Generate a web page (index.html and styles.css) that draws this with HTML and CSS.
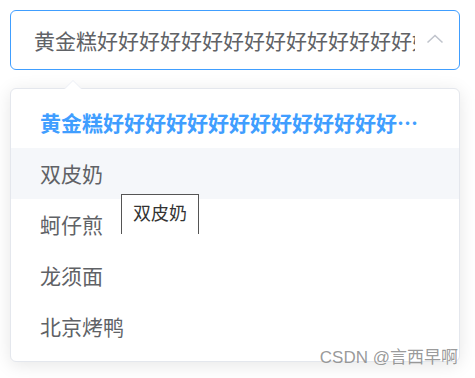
FILE: index.html
```html
<!DOCTYPE html>
<html lang="zh">
<head>
<meta charset="utf-8">
<link rel="stylesheet" href="styles.css">
</head>
<body>
<div class="page">
  <div class="select">
    <div class="select-input">
      <span class="select-value">黄金糕好好好好好好好好好好好好好好好好好好好好</span>
      <svg class="chevron" width="18" height="10" viewBox="0 0 18 10"><polyline points="1.5,8.5 9,1.5 16.5,8.5" fill="none" stroke="#c0c4cc" stroke-width="1.6"/></svg>
    </div>
    <div class="dropdown">
      <div class="arrow"></div>
      <ul class="options">
        <li class="option selected">黄金糕好好好好好好好好好好好好好好好好好好好好</li>
        <li class="option hover">双皮奶</li>
        <li class="option">蚵仔煎</li>
        <li class="option">龙须面</li>
        <li class="option">北京烤鸭</li>
      </ul>
      <div class="tooltip">双皮奶</div>
    </div>
  </div>
  <div class="watermark">CSDN @言西早啊</div>
</div>
</body>
</html>
```
FILE: styles.css
```css
html, body {
  margin: 0;
  padding: 0;
  background: #fff;
}
body {
  font-family: "Liberation Sans", "Noto Sans CJK SC", sans-serif;
}
.page {
  position: relative;
  width: 475px;
  height: 378px;
  padding: 10px 15px 0 10px;
  box-sizing: border-box;
  overflow: hidden;
}
.select {
  position: relative;
  width: 450px;
}
.select-input {
  height: 60px;
  box-sizing: border-box;
  border: 1px solid #409eff;
  border-radius: 6px;
  display: flex;
  align-items: center;
  padding: 0 15px 0 23px;
}
.select-value {
  flex: 1;
  min-width: 0;
  overflow: hidden;
  white-space: nowrap;
  font-size: 21px;
  line-height: 28px;
  color: #606266;
  margin-right: 11px;
  font-family: "Noto Sans CJK SC", sans-serif;
}
.chevron {
  flex: none;
  display: block;
  margin-top: -2px;
}
.dropdown {
  position: relative;
  margin-top: 18px;
  border: 1px solid #e4e7ed;
  border-radius: 6px;
  background: #fff;
  box-shadow: 0 3px 18px 0 rgba(0, 0, 0, 0.1);
}
.arrow {
  position: absolute;
  top: -9px;
  left: 53px;
  width: 0;
  height: 0;
  border-left: 9px solid transparent;
  border-right: 9px solid transparent;
  border-bottom: 9px solid #ebeef5;
}
.arrow::after {
  content: "";
  position: absolute;
  top: 1px;
  left: -8px;
  border-left: 8px solid transparent;
  border-right: 8px solid transparent;
  border-bottom: 8px solid #fff;
}
.options {
  list-style: none;
  margin: 0;
  padding: 8px 0 9px;
}
.option {
  height: 51px;
  line-height: 51px;
  padding: 0 30px 0 29px;
  font-size: 21px;
  color: #606266;
  white-space: nowrap;
  overflow: hidden;
  text-overflow: ellipsis;
  font-family: "Noto Sans CJK SC", sans-serif;
}
.option.selected {
  color: #409eff;
  font-weight: 700;
}
.option.hover {
  background: #f5f7fa;
}
.tooltip {
  position: absolute;
  top: 105px;
  left: 110px;
  width: 78px;
  height: 40px;
  box-sizing: border-box;
  border: 1px solid #555;
  border-bottom: none;
  background: #fff;
  color: #333;
  font-size: 18px;
  line-height: 34px;
  text-align: center;
  font-family: "Noto Sans CJK SC", sans-serif;
}
.watermark {
  position: absolute;
  right: 17px;
  top: 347px;
  font-size: 17px;
  line-height: 22px;
  color: rgba(128, 128, 128, 0.8);
  font-family: "Liberation Sans", "Noto Sans CJK SC", sans-serif;
  white-space: nowrap;
}
```
